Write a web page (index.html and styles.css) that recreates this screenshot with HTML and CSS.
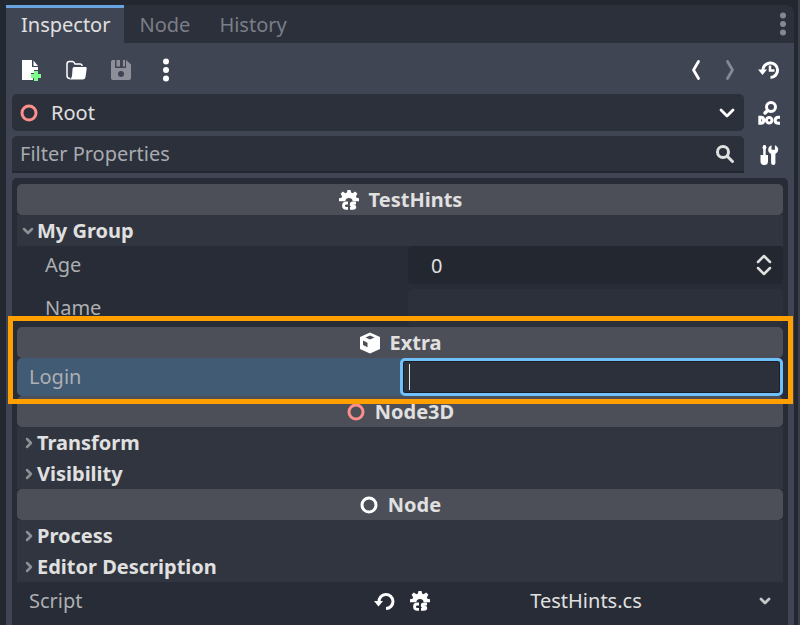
FILE: index.html
```html
<!DOCTYPE html>
<html lang="en">
<head>
    <meta charset="UTF-8">
    <title>Inspector</title>
    <link rel="stylesheet" href="styles.css">
</head>
<body>
    <!-- shared icons -->
    <svg class="defs" width="0" height="0">
        <symbol id="gear" viewBox="0 0 22 22">
            <path fill="#fff" d="M9.500 1h3l.6 2.600 1.500.7 2.600-1.800 2.200 2.200-1.500 2.500.6 1.500 2.500.6v3h-6.300q-.5-3.300-3.700-3.300t-3.700 3.300H1v-3l2.500-.6.6-1.500L2.600 4.700l2.200-2.200 2.600 1.800 1.500-.7z"/>
            <path fill="none" stroke="#fff" stroke-width="2.800" d="M10 14H8.500q-3 0-3 2.700t3 2.700H10M18 14h-3q-1.800 0-1.800 1.400t1.800 1.400q1.800 0 1.800 1.300t-1.800 1.300H12"/>
        </symbol>
        <symbol id="right" viewBox="0 0 12 12">
            <path fill="none" stroke="#8d9095" stroke-width="2.500" stroke-linecap="round" stroke-linejoin="round" d="M5 2l4 4-4 4"/>
        </symbol>
        <symbol id="dots" viewBox="0 0 8 24">
            <circle cx="4" cy="3.500" r="3"/><circle cx="4" cy="12" r="3"/><circle cx="4" cy="20.500" r="3"/>
        </symbol>
    </svg>

    <div class="dock">
        <div class="tabs">
            <button class="tab tab-selected">Inspector</button>
            <button class="tab">Node</button>
            <button class="tab">History</button>
            <button class="dock-menu" aria-label="Dock menu"><svg width="8" height="24" fill="#85888f"><use href="#dots"/></svg></button>
        </div>

        <div class="panel">
            <div class="toolbar">
                <button aria-label="New resource"><svg width="22" height="22" viewBox="0 0 22 22"><path fill="#fff" d="M2 1h10v7h6v3h-4v3h-3v5h2v2H2z"/><path fill="#fff" d="M13.500 1.500V7H18z"/><path fill="#7dfc8c" d="M14 12h4v3h3v4h-3v3h-4v-3h-3v-4h3z"/></svg></button>
                <button aria-label="Open resource"><svg width="22" height="22" viewBox="0 0 22 22"><path fill="none" stroke="#fff" stroke-width="1.500" d="M5 19.500q-3 0-3-3V5q0-2.500 2.500-2.500h3Q9 2.500 10 5h5q2 0 2 2"/><path fill="#fff" d="M9 8h11.500q1.300 0 1.200 1.400L20.500 18q-.4 2.500-3 2.500H4.500Q6.500 19.500 7 17l.6-7.500Q7.800 8 9 8z"/></svg></button>
                <button aria-label="Save resource"><svg width="22" height="22" viewBox="0 0 22 22"><path fill="#8d9099" fill-rule="evenodd" d="M3 1h2v8h11V1l5 4.500V19q0 2-2 2H3q-2 0-2-2V3q0-2 2-2zM11 12a3 3 0 1 0 0 6 3 3 0 0 0 0-6z"/><path fill="#8d9099" d="M6.500 1H10v6.500H6.500zM13 1h2v6.500h-2z"/></svg></button>
                <button aria-label="More options"><svg width="22" height="24" fill="#fff"><use href="#dots"/></svg></button>
                <span class="spacer"></span>
                <button class="history" aria-label="Previous object"><svg width="12" height="22" viewBox="0 0 12 22"><path fill="none" stroke="#fff" stroke-width="2.800" stroke-linecap="round" stroke-linejoin="round" d="M8.500 2.500l-5 8.500 5 8.500"/></svg></button>
                <button class="history" aria-label="Next object"><svg width="12" height="22" viewBox="0 0 12 22"><path fill="none" stroke="#858993" stroke-width="2.800" stroke-linecap="round" stroke-linejoin="round" d="M3.500 2.500l5 8.500-5 8.500"/></svg></button>
                <button aria-label="Object history"><svg width="22" height="22" viewBox="0 0 22 22"><path fill="none" stroke="#fff" stroke-width="3" d="M5 12a7.300 7.300 0 1 1 7.500 6.500"/><path fill="#fff" d="M0 10.500h9L4.500 16z"/><path fill="none" stroke="#fff" stroke-width="2.500" d="M12 6.500v5h4.500"/></svg></button>
            </div>

            <div class="line">
                <button class="box object">
                    <svg width="20" height="20"><circle cx="10" cy="10" r="7" fill="none" stroke="#fc8f8c" stroke-width="3"/></svg>
                    <span>Root</span>
                    <svg width="16" height="12"><path fill="none" stroke="#fff" stroke-width="2.800" stroke-linecap="round" stroke-linejoin="round" d="M2 3l6 6 6-6"/></svg>
                </button>
                <button aria-label="Open documentation"><svg width="22" height="24" viewBox="0 0 22 24"><circle cx="13" cy="6" r="4.500" fill="none" stroke="#fff" stroke-width="3"/><path stroke="#fff" stroke-width="3.500" stroke-linecap="round" d="M9.500 9.500L7 12"/><g fill="none" stroke="#fff" stroke-width="3"><path d="M1.800 16.200h.9q3 0 3 3t-3 3h-.9z"/><circle cx="11.200" cy="19.200" r="2.800"/><path d="M22 16.200h-1.500q-3.300 0-3.300 3t3.300 3H22"/></g></svg></button>
            </div>

            <div class="line">
                <label class="box filter">
                    <input type="text" placeholder="Filter Properties" aria-label="Filter Properties">
                    <svg width="20" height="20"><circle cx="8" cy="8" r="5.500" fill="none" stroke="#e0e0e0" stroke-width="3"/><path stroke="#e0e0e0" stroke-width="3" stroke-linecap="round" d="M12.500 12.500l5 5"/></svg>
                </label>
                <button aria-label="Manage properties"><svg width="22" height="22" viewBox="0 0 22 22"><path fill="#fff" d="M5.500 1h2l1 2.500-.8 2V11H10v6.500q0 3.500-3.700 3.500t-3.800-3.500V11h2.700V5.500l-.8-2z"/><path fill="#fff" d="M13.500 1.200v4.600h3.400V1.200q3.300 1 3.300 4.600 0 3-2.800 4.200v9q0 2-2.100 2t-2.200-2v-9q-2.900-1.200-2.900-4.200 0-3.600 3.300-4.600z"/></svg></button>
            </div>

            <div class="properties">
                <div class="category"><svg width="22" height="22"><use href="#gear"/></svg>TestHints</div>
                <button class="group"><svg width="12" height="12"><path fill="none" stroke="#8d9095" stroke-width="2.500" stroke-linecap="round" stroke-linejoin="round" d="M2 4l4 4 4-4"/></svg>My Group</button>
                <div class="children">
                    <div class="property">
                        <label for="age">Age</label>
                        <div class="field number">
                            <input id="age" type="text" inputmode="numeric" value="0">
                            <svg width="18" height="22"><path fill="none" stroke="#e0e0e0" stroke-width="2.500" stroke-linecap="round" stroke-linejoin="round" d="M3 8l6-6 6 6M3 14l6 6 6-6"/></svg>
                        </div>
                    </div>
                    <div class="property">
                        <label for="name">Name</label>
                        <div class="field"><input id="name" type="text"></div>
                    </div>
                </div>

                <div class="highlight">
                    <div class="category"><svg width="22" height="22" viewBox="0 0 22 22"><path fill="#fff" fill-rule="evenodd" d="M11 .5L21 5v12l-10 4.500L1 17V5zM11 3.500L6.500 5.500 11 7.500l4.500-2zM4 8.500V13l4.500 2.200v-4.500z"/></svg>Extra</div>
                    <div class="property property-selected">
                        <label for="login">Login</label>
                        <div class="field focused"><input id="login" type="text"><span class="caret"></span></div>
                    </div>
                </div>

                <div class="category"><svg width="20" height="20"><circle cx="10" cy="10" r="7" fill="none" stroke="#fc8f8c" stroke-width="3"/></svg>Node3D</div>
                <button class="group"><svg width="12" height="12"><use href="#right"/></svg>Transform</button>
                <button class="group"><svg width="12" height="12"><use href="#right"/></svg>Visibility</button>
                <div class="category"><svg width="20" height="20"><circle cx="10" cy="10" r="7" fill="none" stroke="#fff" stroke-width="3"/></svg>Node</div>
                <button class="group"><svg width="12" height="12"><use href="#right"/></svg>Process</button>
                <button class="group"><svg width="12" height="12"><use href="#right"/></svg>Editor Description</button>
                <div class="property">
                    <div class="with-revert">
                        <label for="script">Script</label>
                        <button aria-label="Revert value"><svg width="22" height="22" viewBox="0 0 22 22"><path fill="none" stroke="#fff" stroke-width="3" d="M5 12a7 7 0 1 1 7 6.500"/><path fill="#fff" d="M0 11h9l-4.500 5.500z"/></svg></button>
                    </div>
                    <button id="script" class="resource">
                        <svg width="22" height="22"><use href="#gear"/></svg>
                        <span>TestHints.cs</span>
                        <svg width="12" height="12"><path fill="none" stroke="#c4c6c9" stroke-width="2.800" stroke-linecap="round" stroke-linejoin="round" d="M2 4l4 4 4-4"/></svg>
                    </button>
                </div>
            </div>
        </div>
    </div>
</body>
</html>
```
FILE: styles.css
```css
*{
    margin: 0;
    padding: 0;
    box-sizing: border-box;
}
body{
    background: #23272f;
    color: #e0e0e0;
    font: 20px/28px "Noto Sans", sans-serif;
}
button,input{
    border: 0;
    background: none;
    color: inherit;
    font: inherit;
}
input{
    outline: none;
    min-width: 0;
}
svg{
    display: block;
    flex: none;
}
.defs{
    position: absolute;
}

.dock{
    display: flex;
    flex-direction: column;
    min-height: 100vh;
    padding: 5px 4px 0 6px;
    border-right: 2px solid #3c404a;
}

/* tabs */
.tabs{
    display: flex;
    height: 38px;
    background: #2b303b;
    border-radius: 0 8px 0 0;
}
.tab{
    padding: 2px 14px 0 15px;
    color: #7b7e86;
}
.tab-selected{
    background: #404553;
    border-top: 3px solid #68a4dd;
    color: #e0e0e0;
    padding-top: 0;
    padding-bottom: 1px;
}
.dock-menu{
    margin-left: auto;
    padding: 0 7px;
}

.panel{
    flex: 1;
    display: flex;
    flex-direction: column;
    gap: 5px;
    padding: 0 6px;
    background: #404553;
}
.toolbar{
    display: flex;
    align-items: center;
    gap: 23px;
    height: 46px;
    padding: 8px 8px 0;
}
.spacer{
    flex: 1;
}
.toolbar .history{
    margin-right: -1px;
}

.line{
    display: flex;
    align-items: center;
    gap: 14px;
    padding-right: 8px;
}
.box{
    flex: 1;
    display: flex;
    align-items: center;
    height: 37px;
    padding: 0 9px 0 7px;
    background: #2b303b;
    border-radius: 5px;
    text-align: left;
}
.object span{
    flex: 1;
    padding-left: 12px;
}
.filter{
    border-bottom: 2px solid #23272f;
    border-radius: 5px 5px 0 0;
}
.filter input{
    flex: 1;
    padding-left: 1px;
}
.filter input::placeholder{
    color: #a9abb0;
    opacity: 1;
}

/* property list */
.properties{
    flex: 1;
    padding: 6px 5px 0;
    background: #272c36;
    border-radius: 5px 5px 0 0;
}
.category,.group{
    display: flex;
    align-items: center;
    width: 100%;
    height: 31px;
    font-weight: bold;
}
.category{
    justify-content: center;
    gap: 9px;
    background: #4c4f57;
    border-radius: 5px;
}
.group{
    gap: 3px;
    padding-left: 5px;
    background: #30353f;
}
.children{
    display: grid;
    gap: 5px;
    padding-left: 16px;
}
.property{
    display: grid;
    grid-template-columns: 1fr 1fr;
    align-items: center;
    height: 38px;
    color: #adafb2;
}
.property label{
    padding-left: 12px;
}
.field{
    position: relative;
    display: flex;
    align-items: center;
    height: 38px;
    background: #2b303b;
    border-radius: 5px;
    color: #e0e0e0;
}
.field input{
    flex: 1;
    height: 100%;
    padding-left: 9px;
}
.number{
    padding: 0 10px 0 14px;
    background: #23272f;
}

.highlight{
    position: relative;
}
.highlight::after{
    content: "";
    position: absolute;
    inset: -11px -10px -8px -9px;
    border: 5px solid #ffa000;
    pointer-events: none;
}
.property-selected{
    background: #415b74;
    border-radius: 5px;
}
.focused{
    border: 3px solid #70c0fa;
    box-shadow: inset 0 0 0 1px #1b1c26;
}
.focused input{
    caret-color: transparent;
}
.caret{
    position: absolute;
    left: 6px;
    top: 3px;
    width: 1px;
    height: 26px;
    background: #e0e0e0;
}

.with-revert{
    display: flex;
    align-items: center;
    justify-content: space-between;
    padding-right: 4px;
}
.resource{
    display: flex;
    align-items: center;
    height: 38px;
    padding: 0 12px 0 9px;
    color: #e0e0e0;
}
.resource span{
    flex: 1;
    padding-right: 18px;
}
```
